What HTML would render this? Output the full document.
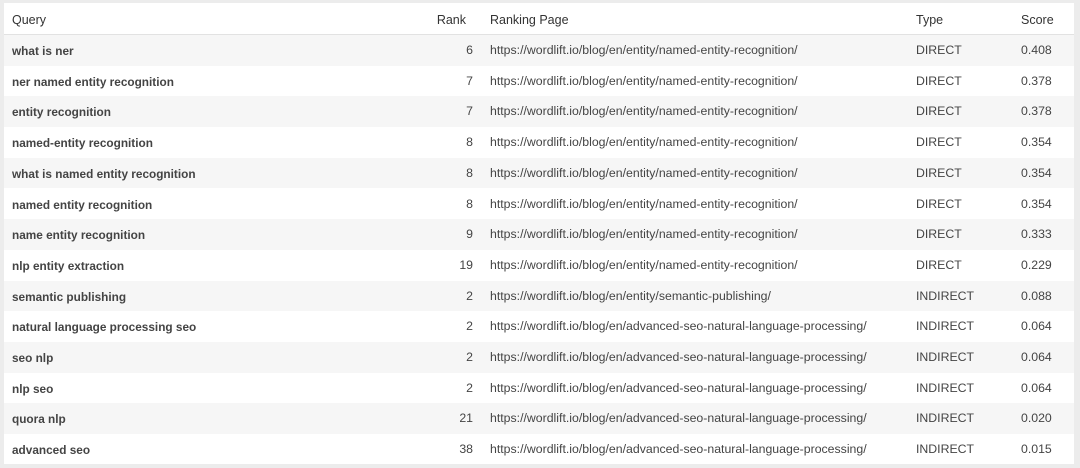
<!DOCTYPE html>
<html><head><style>
html,body{margin:0;padding:0;width:1080px;height:468px;background:#ececec;overflow:hidden}
.p{position:absolute;left:4px;top:3px;width:1070px;height:461px;background:#fff}
.r{position:absolute;left:0;width:1070px;height:30.7px;font:12.3px "Liberation Sans",sans-serif;color:#444;line-height:30.7px}
.r span{position:absolute;white-space:nowrap}
.h{top:0;height:31px;line-height:34px;font-size:12.5px;color:#333;border-bottom:1px solid #e2e2e2}
.g{background:#f6f6f6}
.q{left:8px;top:1px;font-weight:bold;color:#444;font-size:11.8px}
.k{right:601px;text-align:right}
.h .k{right:608px}
.h .q{top:0}
.u{left:486px}
.t{left:912px}
.s{left:1017px}
</style></head><body><div class="p">
<div class="r h"><span class="q" style="font-weight:normal;color:#333;font-size:12.5px">Query</span><span class="k">Rank</span><span class="u">Ranking Page</span><span class="t">Type</span><span class="s">Score</span></div>
</div>
<div style="position:absolute;left:4px;top:35px">
<div class="r g" style="top:0"><span class="q">what is ner</span><span class="k">6</span><span class="u">https://wordlift.io/blog/en/entity/named-entity-recognition/</span><span class="t">DIRECT</span><span class="s">0.408</span></div>
<div class="r" style="top:30.7px"><span class="q">ner named entity recognition</span><span class="k">7</span><span class="u">https://wordlift.io/blog/en/entity/named-entity-recognition/</span><span class="t">DIRECT</span><span class="s">0.378</span></div>
<div class="r g" style="top:61.4px"><span class="q">entity recognition</span><span class="k">7</span><span class="u">https://wordlift.io/blog/en/entity/named-entity-recognition/</span><span class="t">DIRECT</span><span class="s">0.378</span></div>
<div class="r" style="top:92.1px"><span class="q">named-entity recognition</span><span class="k">8</span><span class="u">https://wordlift.io/blog/en/entity/named-entity-recognition/</span><span class="t">DIRECT</span><span class="s">0.354</span></div>
<div class="r g" style="top:122.8px"><span class="q">what is named entity recognition</span><span class="k">8</span><span class="u">https://wordlift.io/blog/en/entity/named-entity-recognition/</span><span class="t">DIRECT</span><span class="s">0.354</span></div>
<div class="r" style="top:153.5px"><span class="q">named entity recognition</span><span class="k">8</span><span class="u">https://wordlift.io/blog/en/entity/named-entity-recognition/</span><span class="t">DIRECT</span><span class="s">0.354</span></div>
<div class="r g" style="top:184.2px"><span class="q">name entity recognition</span><span class="k">9</span><span class="u">https://wordlift.io/blog/en/entity/named-entity-recognition/</span><span class="t">DIRECT</span><span class="s">0.333</span></div>
<div class="r" style="top:214.9px"><span class="q">nlp entity extraction</span><span class="k">19</span><span class="u">https://wordlift.io/blog/en/entity/named-entity-recognition/</span><span class="t">DIRECT</span><span class="s">0.229</span></div>
<div class="r g" style="top:245.6px"><span class="q">semantic publishing</span><span class="k">2</span><span class="u">https://wordlift.io/blog/en/entity/semantic-publishing/</span><span class="t">INDIRECT</span><span class="s">0.088</span></div>
<div class="r" style="top:276.3px"><span class="q">natural language processing seo</span><span class="k">2</span><span class="u">https://wordlift.io/blog/en/advanced-seo-natural-language-processing/</span><span class="t">INDIRECT</span><span class="s">0.064</span></div>
<div class="r g" style="top:307px"><span class="q">seo nlp</span><span class="k">2</span><span class="u">https://wordlift.io/blog/en/advanced-seo-natural-language-processing/</span><span class="t">INDIRECT</span><span class="s">0.064</span></div>
<div class="r" style="top:337.7px"><span class="q">nlp seo</span><span class="k">2</span><span class="u">https://wordlift.io/blog/en/advanced-seo-natural-language-processing/</span><span class="t">INDIRECT</span><span class="s">0.064</span></div>
<div class="r g" style="top:368.4px"><span class="q">quora nlp</span><span class="k">21</span><span class="u">https://wordlift.io/blog/en/advanced-seo-natural-language-processing/</span><span class="t">INDIRECT</span><span class="s">0.020</span></div>
<div class="r" style="top:399.1px"><span class="q">advanced seo</span><span class="k">38</span><span class="u">https://wordlift.io/blog/en/advanced-seo-natural-language-processing/</span><span class="t">INDIRECT</span><span class="s">0.015</span></div>
</div>
</body></html>
